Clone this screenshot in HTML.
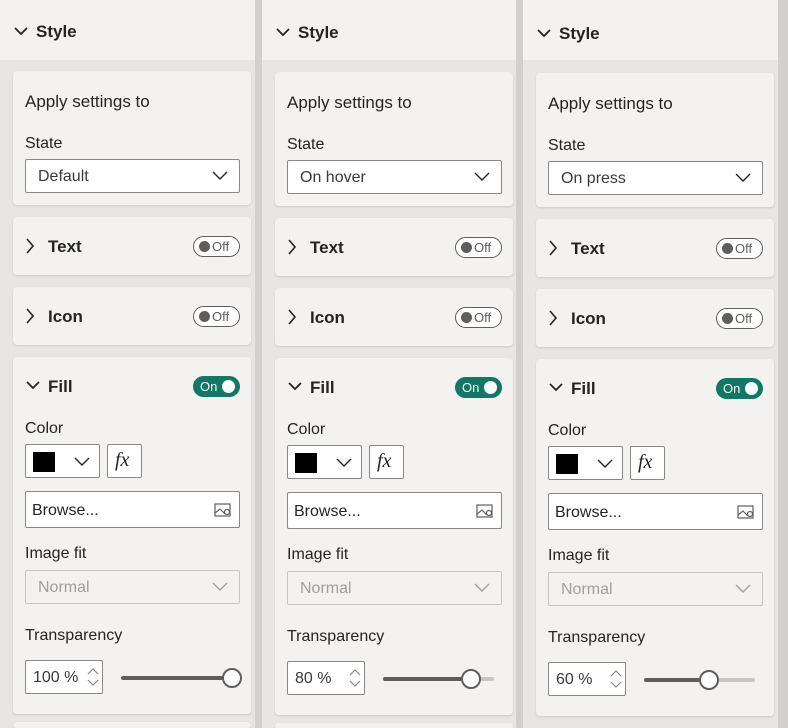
<!DOCTYPE html>
<html style="width:788px;height:728px;overflow:hidden"><head><style>
*{margin:0;padding:0;box-sizing:border-box}
body{width:788px;height:728px;background:#e1dfdd;position:relative;overflow:hidden;font-family:"Segoe UI","Liberation Sans",sans-serif;color:#252423}
.col{position:absolute;top:0;width:256px;height:728px;background:#e8e6e4}
.sep{position:absolute;top:0;width:7px;height:728px;background:#d2d0ce}
.hdr{position:absolute;left:0;top:0;width:256px;height:60px;background:#f3f2f1}
.a{position:absolute}
.card{position:absolute;left:13px;width:238px;background:#f3f2f1;border-radius:4px;box-shadow:0 1px 2px rgba(0,0,0,.12)}
.t{position:absolute;font-size:16px;line-height:20px;white-space:nowrap}
.h{font-size:17px}
.box{position:absolute;background:#fff;border:1px solid #8a8886;border-radius:2px}
.dis{background:#f3f2f1;border-color:#c8c6c4;color:#a19f9d}
.off{position:absolute;width:47px;height:21px;border:1px solid #605e5c;border-radius:11px;background:#fff}
.off:before{content:"";position:absolute;left:5px;top:4px;width:11px;height:11px;border-radius:50%;background:#605e5c}
.off span{position:absolute;left:18px;top:1px;font-size:13px;line-height:17px;color:#605e5c}
.on{position:absolute;width:47px;height:21px;border-radius:11px;background:#117865}
.on:after{content:"";position:absolute;right:5px;top:4px;width:13px;height:13px;border-radius:50%;background:#fff}
.on span{position:absolute;left:7px;top:1px;font-size:13px;line-height:19px;color:#fff}
svg{position:absolute}
</style></head><body>

<div class="col" style="left:0;"><div class="hdr"></div></div>
<div class="sep" style="left:255px"></div>
<div class="col" style="left:262px;"><div class="hdr"></div></div>
<div class="sep" style="left:516px"></div>
<div class="col" style="left:523px;"><div class="hdr"></div></div>
<div class="sep" style="left:778px;width:10px"></div>

<!-- col1 -->
<div class="a" style="left:0;top:0">
 <svg style="left:13px;top:25px" width="16" height="12" viewBox="0 0 16 12"><path d="M2 3l6 6 6-6" fill="none" stroke="#252423" stroke-width="1.8"/></svg>
 <div class="t h" style="left:36px;top:22px;font-weight:600">Style</div>
 <div class="card" style="top:71px;height:134px">
  <div class="t h" style="left:12px;top:21px">Apply settings to</div>
  <div class="t" style="left:12px;top:63px">State</div>
  <div class="box" style="left:12px;top:88px;width:215px;height:34px"><div class="t" style="left:12px;top:7px;color:#3b3a39">Default</div>
   <svg style="left:186px;top:11px" width="16" height="10" viewBox="0 0 16 10"><path d="M1 1l7 7 7-7" fill="none" stroke="#252423" stroke-width="1.4"/></svg></div>
 </div>
 <div class="card" style="top:217px;height:58px">
  <svg style="left:12px;top:21px" width="10" height="16" viewBox="0 0 10 16"><path d="M2 1l6 7-6 7" fill="none" stroke="#252423" stroke-width="1.6"/></svg>
  <div class="t h" style="left:35px;top:20px;font-weight:600">Text</div>
  <div class="off" style="left:180px;top:19px"><span>Off</span></div>
 </div>
 <div class="card" style="top:287px;height:58px">
  <svg style="left:12px;top:21px" width="10" height="16" viewBox="0 0 10 16"><path d="M2 1l6 7-6 7" fill="none" stroke="#252423" stroke-width="1.6"/></svg>
  <div class="t h" style="left:35px;top:20px;font-weight:600">Icon</div>
  <div class="off" style="left:180px;top:19px"><span>Off</span></div>
 </div>
 <div class="card" style="top:357px;height:357px">
  <svg style="left:12px;top:23px" width="16" height="12" viewBox="0 0 16 12"><path d="M2 2l6 6 6-6" fill="none" stroke="#252423" stroke-width="1.8"/></svg>
  <div class="t h" style="left:35px;top:20px;font-weight:600">Fill</div>
  <div class="on" style="left:180px;top:19px"><span>On</span></div>
  <div class="t" style="left:12px;top:62px">Color</div>
  <div class="box" style="left:12px;top:87px;width:75px;height:34px"><div class="a" style="left:7px;top:7px;width:22px;height:20px;background:#000"></div>
   <svg style="left:48px;top:12px" width="16" height="10" viewBox="0 0 16 10"><path d="M1 1l7 7 7-7" fill="none" stroke="#252423" stroke-width="1.4"/></svg></div>
  <div class="box" style="left:94px;top:87px;width:35px;height:34px"><div class="t" style="left:7px;top:5px;font-family:'Liberation Serif',serif;font-style:italic;font-size:20px">fx</div></div>
  <div class="box" style="left:12px;top:134px;width:215px;height:37px"><div class="t" style="left:6px;top:9px">Browse...</div>
   <svg style="left:188px;top:10px" width="18" height="16" viewBox="0 0 18 16"><rect x="1" y="2" width="15" height="12" fill="none" stroke="#605e5c" stroke-width="1.2"/><path d="M1 11l5-4 5 5" fill="none" stroke="#605e5c" stroke-width="1.2"/><circle cx="13" cy="10" r="2.5" fill="#fff" stroke="#605e5c" stroke-width="1.2"/></svg></div>
  <div class="t" style="left:12px;top:187px">Image fit</div>
  <div class="box dis" style="left:12px;top:213px;width:215px;height:34px"><div class="t" style="left:12px;top:7px;color:#a19f9d">Normal</div>
   <svg style="left:186px;top:11px" width="16" height="10" viewBox="0 0 16 10"><path d="M1 1l7 7 7-7" fill="none" stroke="#a19f9d" stroke-width="1.4"/></svg></div>
  <div class="t" style="left:12px;top:269px">Transparency</div>
  <div class="box" style="left:12px;top:303px;width:78px;height:34px"><div class="t" style="left:7px;top:7px;color:#3b3a39">100 %</div>
   <svg style="left:60px;top:4px" width="14" height="24" viewBox="0 0 14 24"><path d="M2 9l5-5 5 5M2 15l5 5 5-5" fill="none" stroke="#8a8886" stroke-width="1.2"/></svg></div>
  <div class="a" style="left:108px;top:319px;width:111px;height:4px;background:#605e5c;border-radius:2px"></div>
  <div class="a" style="left:209px;top:311px;width:20px;height:20px;border-radius:50%;background:#fff;border:2px solid #605e5c"></div>
 </div>
 <div class="card" style="top:722px;height:6px"></div>
</div>

<!-- col2 -->
<div class="a" style="left:262px;top:1px">
 <svg style="left:13px;top:25px" width="16" height="12" viewBox="0 0 16 12"><path d="M2 3l6 6 6-6" fill="none" stroke="#252423" stroke-width="1.8"/></svg>
 <div class="t h" style="left:36px;top:22px;font-weight:600">Style</div>
 <div class="card" style="top:71px;height:134px">
  <div class="t h" style="left:12px;top:21px">Apply settings to</div>
  <div class="t" style="left:12px;top:63px">State</div>
  <div class="box" style="left:12px;top:88px;width:215px;height:34px"><div class="t" style="left:12px;top:7px;color:#3b3a39">On hover</div>
   <svg style="left:186px;top:11px" width="16" height="10" viewBox="0 0 16 10"><path d="M1 1l7 7 7-7" fill="none" stroke="#252423" stroke-width="1.4"/></svg></div>
 </div>
 <div class="card" style="top:217px;height:58px">
  <svg style="left:12px;top:21px" width="10" height="16" viewBox="0 0 10 16"><path d="M2 1l6 7-6 7" fill="none" stroke="#252423" stroke-width="1.6"/></svg>
  <div class="t h" style="left:35px;top:20px;font-weight:600">Text</div>
  <div class="off" style="left:180px;top:19px"><span>Off</span></div>
 </div>
 <div class="card" style="top:287px;height:58px">
  <svg style="left:12px;top:21px" width="10" height="16" viewBox="0 0 10 16"><path d="M2 1l6 7-6 7" fill="none" stroke="#252423" stroke-width="1.6"/></svg>
  <div class="t h" style="left:35px;top:20px;font-weight:600">Icon</div>
  <div class="off" style="left:180px;top:19px"><span>Off</span></div>
 </div>
 <div class="card" style="top:357px;height:357px">
  <svg style="left:12px;top:23px" width="16" height="12" viewBox="0 0 16 12"><path d="M2 2l6 6 6-6" fill="none" stroke="#252423" stroke-width="1.8"/></svg>
  <div class="t h" style="left:35px;top:20px;font-weight:600">Fill</div>
  <div class="on" style="left:180px;top:19px"><span>On</span></div>
  <div class="t" style="left:12px;top:62px">Color</div>
  <div class="box" style="left:12px;top:87px;width:75px;height:34px"><div class="a" style="left:7px;top:7px;width:22px;height:20px;background:#000"></div>
   <svg style="left:48px;top:12px" width="16" height="10" viewBox="0 0 16 10"><path d="M1 1l7 7 7-7" fill="none" stroke="#252423" stroke-width="1.4"/></svg></div>
  <div class="box" style="left:94px;top:87px;width:35px;height:34px"><div class="t" style="left:7px;top:5px;font-family:'Liberation Serif',serif;font-style:italic;font-size:20px">fx</div></div>
  <div class="box" style="left:12px;top:134px;width:215px;height:37px"><div class="t" style="left:6px;top:9px">Browse...</div>
   <svg style="left:188px;top:10px" width="18" height="16" viewBox="0 0 18 16"><rect x="1" y="2" width="15" height="12" fill="none" stroke="#605e5c" stroke-width="1.2"/><path d="M1 11l5-4 5 5" fill="none" stroke="#605e5c" stroke-width="1.2"/><circle cx="13" cy="10" r="2.5" fill="#fff" stroke="#605e5c" stroke-width="1.2"/></svg></div>
  <div class="t" style="left:12px;top:187px">Image fit</div>
  <div class="box dis" style="left:12px;top:213px;width:215px;height:34px"><div class="t" style="left:12px;top:7px;color:#a19f9d">Normal</div>
   <svg style="left:186px;top:11px" width="16" height="10" viewBox="0 0 16 10"><path d="M1 1l7 7 7-7" fill="none" stroke="#a19f9d" stroke-width="1.4"/></svg></div>
  <div class="t" style="left:12px;top:269px">Transparency</div>
  <div class="box" style="left:12px;top:303px;width:78px;height:34px"><div class="t" style="left:7px;top:7px;color:#3b3a39">80 %</div>
   <svg style="left:60px;top:4px" width="14" height="24" viewBox="0 0 14 24"><path d="M2 9l5-5 5 5M2 15l5 5 5-5" fill="none" stroke="#8a8886" stroke-width="1.2"/></svg></div>
  <div class="a" style="left:108px;top:319px;width:111px;height:4px;background:#c8c6c4;border-radius:2px"></div>
  <div class="a" style="left:108px;top:319px;width:90px;height:4px;background:#605e5c;border-radius:2px"></div>
  <div class="a" style="left:186px;top:311px;width:20px;height:20px;border-radius:50%;background:#fff;border:2px solid #605e5c"></div>
 </div>
 <div class="card" style="top:722px;height:6px"></div>
</div>

<!-- col3 -->
<div class="a" style="left:523px;top:2px">
 <svg style="left:13px;top:25px" width="16" height="12" viewBox="0 0 16 12"><path d="M2 3l6 6 6-6" fill="none" stroke="#252423" stroke-width="1.8"/></svg>
 <div class="t h" style="left:36px;top:22px;font-weight:600">Style</div>
 <div class="card" style="top:71px;height:134px">
  <div class="t h" style="left:12px;top:21px">Apply settings to</div>
  <div class="t" style="left:12px;top:63px">State</div>
  <div class="box" style="left:12px;top:88px;width:215px;height:34px"><div class="t" style="left:12px;top:7px;color:#3b3a39">On press</div>
   <svg style="left:186px;top:11px" width="16" height="10" viewBox="0 0 16 10"><path d="M1 1l7 7 7-7" fill="none" stroke="#252423" stroke-width="1.4"/></svg></div>
 </div>
 <div class="card" style="top:217px;height:58px">
  <svg style="left:12px;top:21px" width="10" height="16" viewBox="0 0 10 16"><path d="M2 1l6 7-6 7" fill="none" stroke="#252423" stroke-width="1.6"/></svg>
  <div class="t h" style="left:35px;top:20px;font-weight:600">Text</div>
  <div class="off" style="left:180px;top:19px"><span>Off</span></div>
 </div>
 <div class="card" style="top:287px;height:58px">
  <svg style="left:12px;top:21px" width="10" height="16" viewBox="0 0 10 16"><path d="M2 1l6 7-6 7" fill="none" stroke="#252423" stroke-width="1.6"/></svg>
  <div class="t h" style="left:35px;top:20px;font-weight:600">Icon</div>
  <div class="off" style="left:180px;top:19px"><span>Off</span></div>
 </div>
 <div class="card" style="top:357px;height:357px">
  <svg style="left:12px;top:23px" width="16" height="12" viewBox="0 0 16 12"><path d="M2 2l6 6 6-6" fill="none" stroke="#252423" stroke-width="1.8"/></svg>
  <div class="t h" style="left:35px;top:20px;font-weight:600">Fill</div>
  <div class="on" style="left:180px;top:19px"><span>On</span></div>
  <div class="t" style="left:12px;top:62px">Color</div>
  <div class="box" style="left:12px;top:87px;width:75px;height:34px"><div class="a" style="left:7px;top:7px;width:22px;height:20px;background:#000"></div>
   <svg style="left:48px;top:12px" width="16" height="10" viewBox="0 0 16 10"><path d="M1 1l7 7 7-7" fill="none" stroke="#252423" stroke-width="1.4"/></svg></div>
  <div class="box" style="left:94px;top:87px;width:35px;height:34px"><div class="t" style="left:7px;top:5px;font-family:'Liberation Serif',serif;font-style:italic;font-size:20px">fx</div></div>
  <div class="box" style="left:12px;top:134px;width:215px;height:37px"><div class="t" style="left:6px;top:9px">Browse...</div>
   <svg style="left:188px;top:10px" width="18" height="16" viewBox="0 0 18 16"><rect x="1" y="2" width="15" height="12" fill="none" stroke="#605e5c" stroke-width="1.2"/><path d="M1 11l5-4 5 5" fill="none" stroke="#605e5c" stroke-width="1.2"/><circle cx="13" cy="10" r="2.5" fill="#fff" stroke="#605e5c" stroke-width="1.2"/></svg></div>
  <div class="t" style="left:12px;top:187px">Image fit</div>
  <div class="box dis" style="left:12px;top:213px;width:215px;height:34px"><div class="t" style="left:12px;top:7px;color:#a19f9d">Normal</div>
   <svg style="left:186px;top:11px" width="16" height="10" viewBox="0 0 16 10"><path d="M1 1l7 7 7-7" fill="none" stroke="#a19f9d" stroke-width="1.4"/></svg></div>
  <div class="t" style="left:12px;top:269px">Transparency</div>
  <div class="box" style="left:12px;top:303px;width:78px;height:34px"><div class="t" style="left:7px;top:7px;color:#3b3a39">60 %</div>
   <svg style="left:60px;top:4px" width="14" height="24" viewBox="0 0 14 24"><path d="M2 9l5-5 5 5M2 15l5 5 5-5" fill="none" stroke="#8a8886" stroke-width="1.2"/></svg></div>
  <div class="a" style="left:108px;top:319px;width:111px;height:4px;background:#c8c6c4;border-radius:2px"></div>
  <div class="a" style="left:108px;top:319px;width:67px;height:4px;background:#605e5c;border-radius:2px"></div>
  <div class="a" style="left:163px;top:311px;width:20px;height:20px;border-radius:50%;background:#fff;border:2px solid #605e5c"></div>
 </div>
</div>
</body></html>
